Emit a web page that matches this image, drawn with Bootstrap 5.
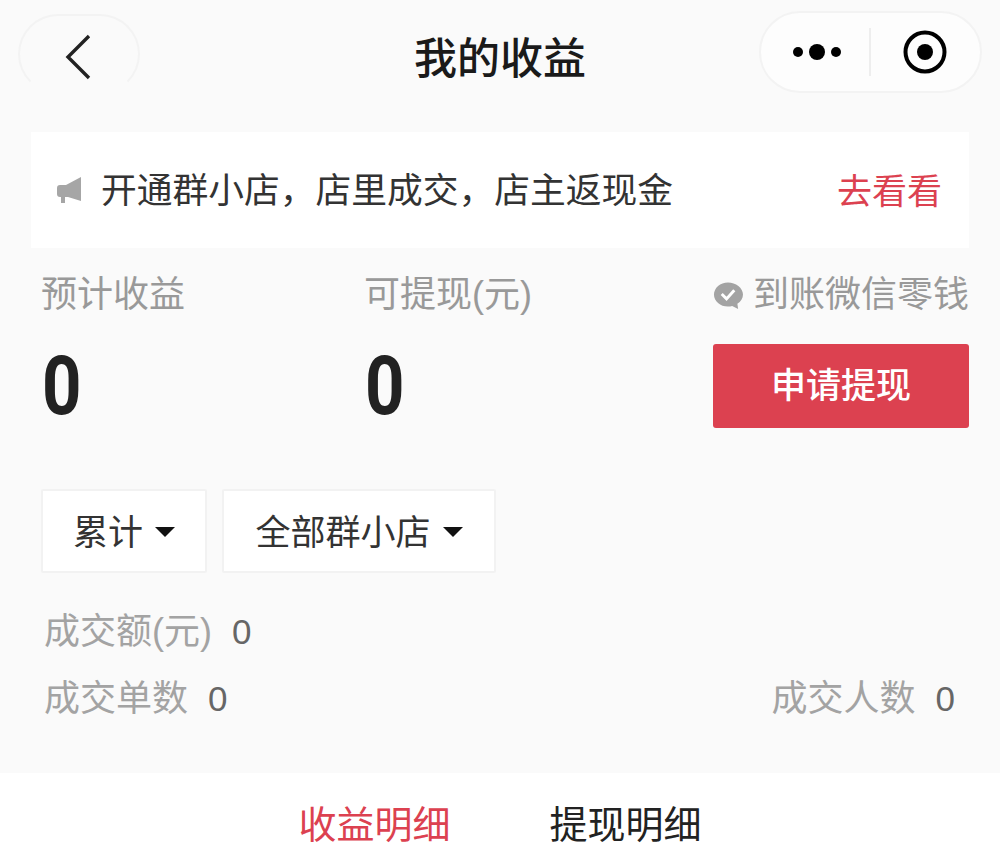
<!DOCTYPE html>
<html lang="zh-CN">
<head>
  <meta charset="UTF-8" />
  <title>我的收益</title>
  <link href="https://cdn.jsdelivr.net/npm/bootstrap@5.3.3/dist/css/bootstrap.min.css" rel="stylesheet">
  <style>
    html, body { height: 850px; overflow: hidden; }
    body {
      background: #fafafa;
      font-family: "Liberation Sans", "Noto Sans CJK SC", sans-serif;
      color: #333;
      --red: #dc4150;
    }
    .page-wrap { width: 1000px; height: 850px; display: flex; flex-direction: column; }
    .top-bar { height: 132px; padding: 11px 18px 0 18px; }
    .bar-side { flex: 1 1 0; }
    .back-pill {
      width: 122px; height: 80px; margin-top: 3px; border-radius: 40px;
      border: 2px solid #f3f3f3; border-bottom-color: transparent;
    }
    .back-pill svg { margin-top: 6px; }
    .page-title { font-size: 43px; font-weight: 500; color: #1a1a1a; line-height: 1; margin-top: 27px; }
    .caps-pill {
      width: 223px; height: 82px; border-radius: 41px; background: #fdfdfd;
      border: 2px solid #f3f3f3;
    }
    .caps-dots { margin-left: 24px; }
    .caps-line { width: 2px; height: 48px; background: #eeeeee; margin-left: 24px; }
    .caps-dot { margin-left: 32px; }
    .notice-box { margin: 0 31px; height: 116px; background: #fff; padding: 0 27px 0 26px; }
    .notice-text { font-size: 35.75px; color: #333; line-height: 1; margin-left: 20px; margin-top: 4px; }
    .notice-link { font-size: 35px; color: var(--red); line-height: 1; margin-top: 3px; }
    .stats-row { margin: 27px 31px 0 42px; height: 171px; }
    .stat-one { width: 323px; }
    .stat-label { font-size: 36px; color: #999; line-height: 40px; margin-left: -1px; }
    .stat-num { font-size: 82px; font-weight: 700; font-family: "Roboto", sans-serif; color: #222; line-height: 1; margin-top: 30px; transform: scaleX(.84); transform-origin: left center; }
    .stat-side { width: 256px; margin-left: auto; }
    .side-label { font-size: 36px; color: #999; line-height: 40px; margin-left: 10px; white-space: nowrap; }
    .cash-btn {
      height: 84px; margin-top: 29px; background: var(--red); border-radius: 3px; border: 0;
      color: #fff; font-size: 35px; font-weight: 500; width: 100%; padding: 0;
    }
    .cash-btn:hover { background: var(--red); color: #fff; }
    .filter-row { margin: 43px 0 0 41px; gap: 15px; }
    .filter-box {
      height: 84px; background: #fff; border: 2px solid #f2f2f2; border-radius: 2px;
      font-size: 35px; color: #333; line-height: 1; padding-top: 2px;
    }
    .filter-a { width: 166px; }
    .filter-b { width: 274px; }
    .filter-tri { width: 0; height: 0; margin-left: 12px; border-left: 10px solid transparent; border-right: 10px solid transparent; border-top: 10px solid #111; }
    .meta-row { font-size: 36px; color: #a3a3a3; line-height: 40px; margin-left: 44px; }
    .meta-row b { font-weight: 400; font-size: 35px; color: #666; margin-left: 20px; }
    .meta-first { margin-top: 39px; }
    .meta-second { margin-top: 27px; margin-right: 45px; }
    .tab-bar { margin-top: auto; height: 77px; background: #fff; gap: 99px; padding-top: 33px; }
    .tab-item { font-size: 38px; line-height: 1; color: #222; }
    .tab-on { color: var(--red); }
  </style>
</head>
<body>
<div class="page-wrap">
  <div class="top-bar d-flex align-items-start">
    <div class="bar-side d-flex">
      <div class="back-pill d-flex align-items-center justify-content-center">
        <svg width="28" height="48" viewBox="0 0 28 48"><path d="M24 3 3 24l21 21" fill="none" stroke="#222" stroke-width="3.4"/></svg>
      </div>
    </div>
    <div class="page-title">我的收益</div>
    <div class="bar-side d-flex justify-content-end">
      <div class="caps-pill d-flex align-items-center">
        <svg class="caps-dots" width="60" height="24" viewBox="0 0 60 24" fill="#000"><circle cx="13" cy="12" r="5"/><circle cx="32" cy="12" r="8"/><circle cx="51" cy="12" r="5"/></svg>
        <div class="caps-line"></div>
        <svg class="caps-dot" width="44" height="44" viewBox="0 0 44 44"><circle cx="22" cy="22" r="19.500" fill="none" stroke="#000" stroke-width="4"/><circle cx="22" cy="22" r="8" fill="#000"/></svg>
      </div>
    </div>
  </div>

  <div class="notice-box d-flex align-items-center justify-content-between">
    <div class="d-flex align-items-center">
      <svg width="24" height="27" viewBox="0 0 24 27" fill="#a6a6a6"><path d="M0 11q0-3 3-3h6L24 0v24L11 20H8v6H4v-6H3q-3 0-3-3z"/></svg>
      <span class="notice-text">开通群小店，店里成交，店主返现金</span>
    </div>
    <span class="notice-link">去看看</span>
  </div>

  <div class="stats-row d-flex">
    <div class="stat-one">
      <div class="stat-label">预计收益</div>
      <div class="stat-num">0</div>
    </div>
    <div class="stat-one">
      <div class="stat-label">可提现(元)</div>
      <div class="stat-num">0</div>
    </div>
    <div class="stat-side">
      <div class="d-flex align-items-center">
        <svg width="31" height="29" viewBox="0 0 31 29"><path d="M15.500 1C7.500 1 1 6.600 1 13.500S7.500 26 15.500 26c1.500 0 3-.2 4.300-.6l6.200 3-.8-5.300c3.500-2.300 5.800-5.700 5.800-9.600C31 6.600 23.500 1 15.500 1z" fill="#a3a3a3"/><path d="m9 13 5 5 8-9" fill="none" stroke="#fff" stroke-width="3"/></svg>
        <span class="side-label">到账微信零钱</span>
      </div>
      <button type="button" class="btn cash-btn">申请提现</button>
    </div>
  </div>

  <div class="filter-row d-flex">
    <div class="filter-box filter-a d-flex align-items-center justify-content-center">累计<span class="filter-tri"></span></div>
    <div class="filter-box filter-b d-flex align-items-center justify-content-center">全部群小店<span class="filter-tri"></span></div>
  </div>

  <div class="meta-row meta-first">成交额(元)<b>0</b></div>
  <div class="meta-row meta-second d-flex justify-content-between">
    <span>成交单数<b>0</b></span>
    <span>成交人数<b>0</b></span>
  </div>

  <div class="tab-bar d-flex justify-content-center">
    <span class="tab-item tab-on">收益明细</span>
    <span class="tab-item">提现明细</span>
  </div>
</div>
<script src="https://cdn.jsdelivr.net/npm/bootstrap@5.3.3/dist/js/bootstrap.bundle.min.js"></script>
</body>
</html>
